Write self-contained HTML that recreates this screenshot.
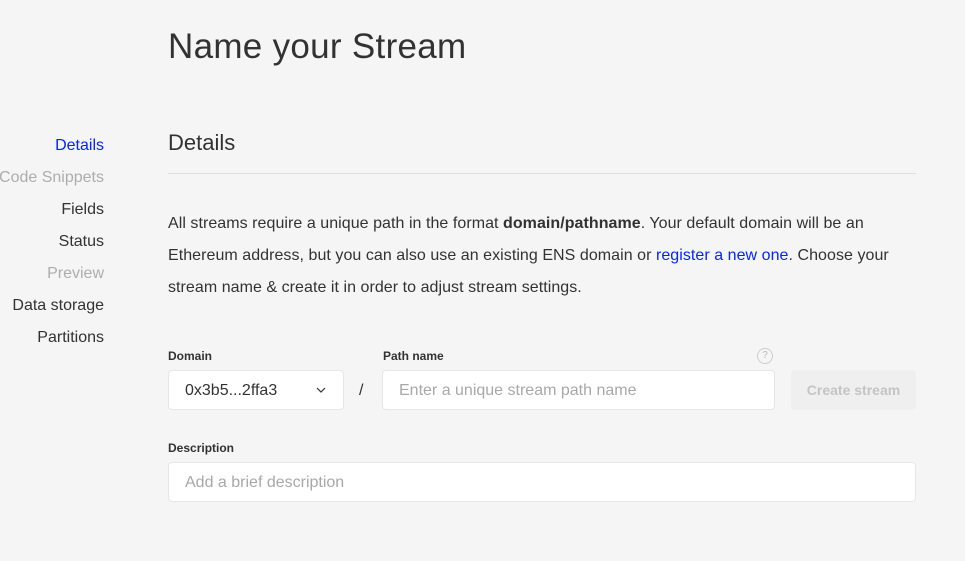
<!DOCTYPE html>
<html><head><style>
body{margin:0;width:965px;height:561px;background:#f5f5f5;font-family:"Liberation Sans",sans-serif;color:#323232;position:relative;overflow:hidden}
.a{position:absolute;white-space:nowrap}
.nav{right:861px;font-size:16px;text-align:right}
.box{position:absolute;background:#fff;border:1px solid #e6e6e6;border-radius:4px;box-sizing:border-box}
.lbl{font-size:12px;font-weight:bold;color:#323232}
.ph{color:#a8a8a8;font-size:16px}
</style></head><body>
<div class="a" style="left:168px;top:27px;font-size:35px;letter-spacing:0.3px;color:#323232">Name your Stream</div>
<div class="a nav" style="top:137px;color:#0324ff">Details</div>
<div class="a nav" style="top:169px;color:#adadad">Code Snippets</div>
<div class="a nav" style="top:201px">Fields</div>
<div class="a nav" style="top:233px">Status</div>
<div class="a nav" style="top:265px;color:#adadad">Preview</div>
<div class="a nav" style="top:297px">Data storage</div>
<div class="a nav" style="top:329px">Partitions</div>
<div class="a" style="left:168px;top:130px;font-size:22px">Details</div>
<div style="position:absolute;left:168px;top:173px;width:748px;height:1px;background:#dedede"></div>
<div class="a" style="left:168px;top:208px;font-size:16px;line-height:32px;white-space:normal;width:750px;letter-spacing:0.05px">All streams require a unique path in the format <b>domain/pathname</b>. Your default domain will be an Ethereum address, but you can also use an existing ENS domain or <span style="color:#0324ff">register a new one</span>. Choose your stream name &amp; create it in order to adjust stream settings.</div>
<div class="a lbl" style="left:168px;top:349px">Domain</div>
<div class="a lbl" style="left:383px;top:349px">Path name</div>
<div class="a" style="left:757px;top:348px;width:14px;height:14px;border:1px solid #ccc;border-radius:50%;font-size:10px;color:#bbb;text-align:center;line-height:14px">?</div>
<div class="box" style="left:168px;top:370px;width:176px;height:40px"></div>
<div class="a" style="left:185px;top:382px;font-size:16px">0x3b5...2ffa3</div>
<svg class="a" style="left:316px;top:387px" width="10" height="6"><path d="M1 1l4 4 4-4" stroke="#323232" fill="none" stroke-width="1.2"/></svg>
<div class="a" style="left:359px;top:382px;font-size:16px">/</div>
<div class="box" style="left:382px;top:370px;width:393px;height:40px"></div>
<div class="a ph" style="left:399px;top:382px">Enter a unique stream path name</div>
<div class="a" style="left:791px;top:370px;width:125px;height:40px;background:#efefef;border-radius:4px;color:#c4c4c4;font-size:14px;font-weight:bold;text-align:center;line-height:40px">Create stream</div>
<div class="a lbl" style="left:168px;top:441px">Description</div>
<div class="box" style="left:168px;top:462px;width:748px;height:40px"></div>
<div class="a ph" style="left:185px;top:474px">Add a brief description</div>
</body></html>
